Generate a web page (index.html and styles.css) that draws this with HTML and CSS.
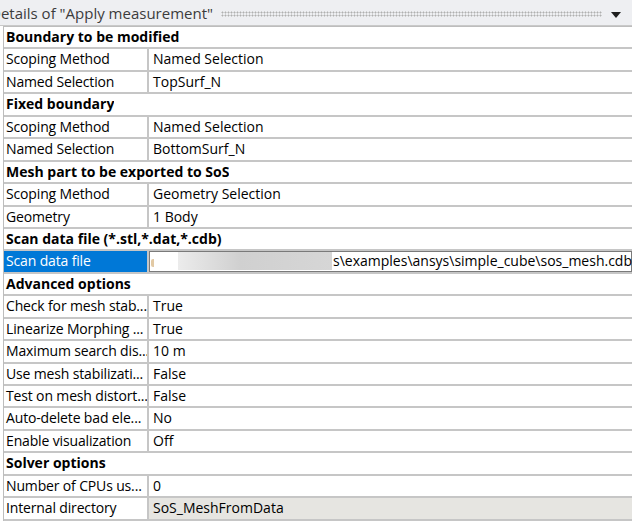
FILE: index.html
```html
<!DOCTYPE html>
<html lang="en">
<head>
    <meta charset="UTF-8">
    <title>Details of "Apply measurement"</title>
    <link rel="stylesheet" href="styles.css">
</head>
<body>
    <div class="panel">
        <div class="titlebar">
            <span class="title">Details of "Apply measurement"</span>
            <span class="grip"></span>
            <svg class="arrow" width="12" height="8" viewBox="0 0 12 8"><path d="M1 1 H11 L6 7 Z" fill="#1e1e1e"/></svg>
        </div>

        <div class="grid">
            <div class="row group"><div class="name">Boundary to be modified</div></div>
            <div class="row"><div class="name">Scoping Method</div><div class="value">Named Selection</div></div>
            <div class="row"><div class="name">Named Selection</div><div class="value">TopSurf_N</div></div>

            <div class="row group"><div class="name">Fixed boundary</div></div>
            <div class="row"><div class="name">Scoping Method</div><div class="value">Named Selection</div></div>
            <div class="row"><div class="name">Named Selection</div><div class="value">BottomSurf_N</div></div>

            <div class="row group"><div class="name">Mesh part to be exported to SoS</div></div>
            <div class="row"><div class="name">Scoping Method</div><div class="value">Geometry Selection</div></div>
            <div class="row"><div class="name">Geometry</div><div class="value">1 Body</div></div>

            <div class="row group"><div class="name">Scan data file (*.stl,*.dat,*.cdb)</div></div>
            <div class="row selected">
                <div class="name">Scan data file</div>
                <div class="value editing"><span class="lead"></span><span class="blur"></span><span class="path">s\examples\ansys\simple_cube\sos_mesh.cdb</span></div>
            </div>

            <div class="row group"><div class="name">Advanced options</div></div>
            <div class="row"><div class="name">Check for mesh stab...</div><div class="value">True</div></div>
            <div class="row"><div class="name">Linearize Morphing ...</div><div class="value">True</div></div>
            <div class="row"><div class="name">Maximum search dis...</div><div class="value">10 m</div></div>
            <div class="row"><div class="name">Use mesh stabilizati...</div><div class="value">False</div></div>
            <div class="row"><div class="name">Test on mesh distort...</div><div class="value">False</div></div>
            <div class="row"><div class="name">Auto-delete bad ele...</div><div class="value">No</div></div>
            <div class="row"><div class="name">Enable visualization</div><div class="value">Off</div></div>

            <div class="row group"><div class="name">Solver options</div></div>
            <div class="row"><div class="name">Number of CPUs us...</div><div class="value">0</div></div>
            <div class="row"><div class="name">Internal directory</div><div class="value readonly">SoS_MeshFromData</div></div>
        </div>
    </div>
</body>
</html>
```

FILE: styles.css
```css
body {
    margin: 0;
    background-color: #fff;
    font-family: "Open Sans", "Noto Sans", sans-serif;
    font-size: 14px;
    color: #000;
    overflow: hidden;
}

.panel {
    width: 632px;
    height: 527px;
    background-color: #fff;
}

.titlebar {
    height: 25px;
    display: flex;
    align-items: center;
    background-color: #eeeff2;
    border-bottom: 1px solid #c9c9c9;
    overflow: hidden;
}

.title {
    margin-left: -10px;
    white-space: nowrap;
    color: #3c3c3c;
    font-size: 15px;
}

.grip {
    flex: 1;
    height: 6px;
    margin: 2px 8px 0 8px;
    background-image: radial-gradient(circle, #b0b0b0 0.9px, transparent 1.1px);
    background-size: 3px 3px;
}

.arrow {
    margin-right: 10px;
    margin-top: 4px;
}

.grid {
    margin-left: 3px;
    border-left: 1px solid #bdbdbd;
    border-top: 1px solid #bdbdbd;
    background-color: #fff;
}

.row {
    display: flex;
    height: 22.45px;
    box-sizing: border-box;
    border-bottom: 2px solid #c6c6c6;
}

.name {
    width: 141px;
    flex: none;
    padding-left: 2px;
    line-height: 20px;
    letter-spacing: -0.15px;
    white-space: nowrap;
    overflow: hidden;
    border-right: 2px solid #c6c6c6;
}

.value {
    flex: 1;
    padding-left: 4px;
    line-height: 20px;
    white-space: nowrap;
    overflow: hidden;
}

.group .name {
    width: auto;
    border-right: none;
    font-weight: bold;
    letter-spacing: 0;
}

.selected .name {
    background-color: #0078d7;
    color: #fff;
}

.editing {
    display: flex;
    padding-left: 2px;
    box-shadow: inset 0 0 0 1px #7a7a7a;
}

.lead {
    width: 3px;
    height: 8px;
    margin-top: 8px;
    border-radius: 2px 0 0 2px;
    background-color: #e2c9a4;
}

.blur {
    width: 172px;
    height: 18px;
    margin-top: 1px;
    margin-left: 24px;
    background: linear-gradient(to right, #ececec, #d0d0d0 40%, #d6d6d6);
}

.path {
    margin-left: 1px;
}

.readonly {
    background-color: #e6e5e1;
}
```
